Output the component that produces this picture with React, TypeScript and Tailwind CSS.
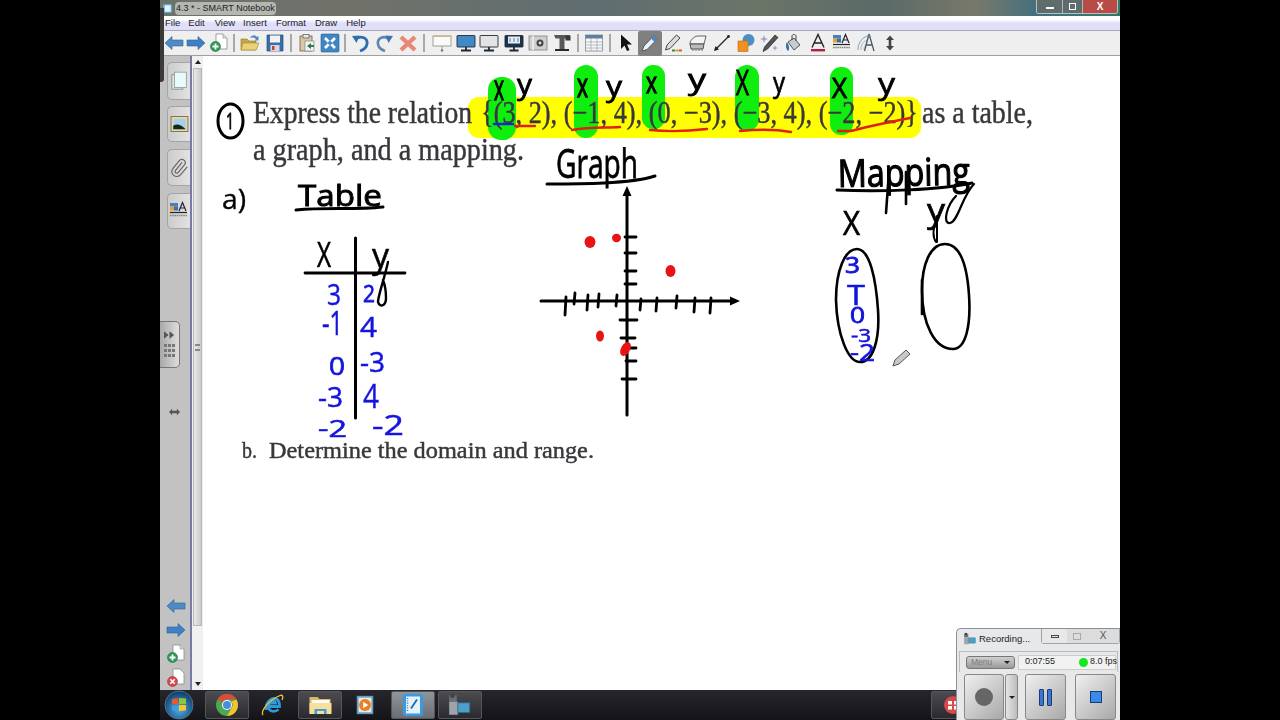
import React from "react";
import { Paperclip } from "lucide-react";

type P = { className?: string };
const I = ({ children, className = "w-[20px] h-[20px]" }: { children: React.ReactNode; className?: string }) => (
  <svg viewBox="0 0 20 20" className={className}>{children}</svg>
);

const ArrowL = (p: P) => (
  <I {...p}><path d="M1 10 L8 3.5 V7 H19 V13 H8 V16.5 Z" fill="#4d8ac6" stroke="#2f6296" strokeWidth=".6" /></I>
);
const ArrowR = (p: P) => (
  <I {...p}><path d="M19 10 L12 3.5 V7 H1 V13 H12 V16.5 Z" fill="#3f7fc4" stroke="#2f6296" strokeWidth=".6" /></I>
);
const NewPage = (p: P) => (
  <I {...p}>
    <path d="M7 1 H14 L18 5 V16 H7 Z" fill="#fff" stroke="#8a8a8a" strokeWidth=".8" />
    <path d="M14 1 V5 H18" fill="#ddd" stroke="#8a8a8a" strokeWidth=".6" />
    <circle cx="6.5" cy="13.5" r="5" fill="#2f9a58" stroke="#1f6a3a" strokeWidth=".6" />
    <path d="M6.5 10.5 V16.5 M3.5 13.5 H9.5" stroke="#fff" strokeWidth="1.8" />
  </I>
);
const DelPage = (p: P) => (
  <I {...p}>
    <path d="M7 1 H14 L18 5 V16 H7 Z" fill="#fff" stroke="#8a8a8a" strokeWidth=".8" />
    <circle cx="6.5" cy="13.5" r="5" fill="#d84850" stroke="#983038" strokeWidth=".6" />
    <path d="M4.3 11.3 L8.7 15.7 M8.7 11.3 L4.3 15.7" stroke="#fff" strokeWidth="1.6" />
  </I>
);
const Folder = (p: P) => (
  <I {...p}>
    <path d="M1 17 V6 H7 L9 8 H16 V17 Z" fill="#c9a445" stroke="#8e7430" strokeWidth=".6" />
    <path d="M1 17 L3 10 H19 L16 17 Z" fill="#ecd078" stroke="#a08838" strokeWidth=".6" />
    <path d="M10 5 C12 1.5 15 1.5 17 4 L18.5 3 V7.5 H14.5 L16 6 C14.5 4.5 12.5 4 10 5Z" fill="#4d8ac6" />
  </I>
);
const Save = (p: P) => (
  <I {...p}>
    <path d="M2 2 H18 V18 H2 Z" fill="#3a6ea8" stroke="#234a78" strokeWidth=".7" />
    <rect x="5" y="2.5" width="10" height="7" fill="#f2f2f2" />
    <rect x="5.5" y="12" width="9" height="6" fill="#d8d8e0" />
    <rect x="7" y="13" width="2.5" height="4" fill="#c04040" />
  </I>
);
const Paste = (p: P) => (
  <I {...p}>
    <rect x="3" y="3" width="12" height="15" fill="#d8c8a8" stroke="#6c6050" strokeWidth=".8" />
    <rect x="6" y="1.5" width="6" height="3.5" fill="#e8e8e8" stroke="#555" strokeWidth=".7" />
    <rect x="8" y="8" width="9" height="10" fill="#f4f4f4" stroke="#777" strokeWidth=".6" />
    <path d="M10 13 L14 10 V12 H17 V14 H14 V16 Z" fill="#2f7a48" />
  </I>
);
const Tools = (p: P) => (
  <I {...p}>
    <rect x="1" y="1" width="18" height="18" rx="1" fill="#3f86c4" stroke="#2a5f90" strokeWidth=".6" />
    <path d="M5 5 L15 15 M15 5 L5 15" stroke="#fff" strokeWidth="2.6" />
    <circle cx="10" cy="10" r="2" fill="#3f86c4" />
  </I>
);
const Undo = (p: P) => (
  <I {...p}>
    <path d="M5 6 C10 2 17 5 16 11 C15.5 15 12 17 9 18" fill="none" stroke="#2f6eb0" strokeWidth="2.8" />
    <path d="M1 3 L8.5 2.5 L5.5 10 Z" fill="#2f6eb0" />
  </I>
);
const Redo = (p: P) => (
  <I {...p}>
    <path d="M15 6 C10 2 3 5 4 11 C4.5 15 8 17 11 18" fill="none" stroke="#5f88b0" strokeWidth="2.6" />
    <path d="M19 3 L11.5 2.5 L14.5 10 Z" fill="#3f74aa" />
  </I>
);
const RedX = (p: P) => (
  <I {...p}><path d="M3 4 L17 17 M17 4 L3 17" stroke="#e88878" strokeWidth="4.4" /></I>
);
const Board = (p: P) => (
  <I {...p}>
    <rect x="1" y="3" width="18" height="10" fill="#fafafa" stroke="#9a9a8a" strokeWidth=".9" />
    <rect x="1" y="2.5" width="18" height="1.5" fill="#c8b890" />
    <path d="M10 13 V17" stroke="#999" /><circle cx="10" cy="17.5" r="1.2" fill="#777" />
  </I>
);
const Screen = ({ className, fill }: P & { fill: string }) => (
  <I className={className}>
    <rect x="1" y="2.5" width="18" height="11.5" rx=".6" fill={fill} stroke="#1f2a38" strokeWidth=".9" />
    <path d="M10 14 V16.5 M5 17.5 H15" stroke="#1f2a38" strokeWidth="1.8" />
  </I>
);
const Screen3 = (p: P) => (
  <I {...p}>
    <rect x="1" y="2.5" width="18" height="11.5" rx=".6" fill="#17344e" stroke="#1f2a38" strokeWidth=".9" />
    <rect x="4" y="3.5" width="12" height="7" fill="#e8eef4" />
    <path d="M6 5 V9 M10 5 V9 M14 5 V9" stroke="#5a7a9a" />
    <path d="M10 14 V16.5 M5.5 17.5 H14.5" stroke="#1f2a38" strokeWidth="1.8" />
  </I>
);
const Camera = (p: P) => (
  <I {...p}>
    <rect x="1" y="3" width="18" height="14" fill="#cfcfcf" stroke="#808080" strokeWidth=".8" />
    <rect x="4" y="3" width="2" height="14" fill="#e8e8e8" />
    <circle cx="12" cy="10" r="3.5" fill="#444" /><circle cx="12" cy="10" r="1.4" fill="#ddd" />
  </I>
);
const Projector = (p: P) => (
  <I {...p}>
    <path d="M2 2 H18 L16.5 5.5 H12.5 V16 H7.5 V5.5 H3.5 Z" fill="#55585a" />
    <rect x="13.5" y="2.5" width="5" height="5" fill="#38383a" />
    <rect x="3" y="16" width="14" height="2" fill="#2a2a2a" />
  </I>
);
const TableIcon = (p: P) => (
  <I {...p}>
    <rect x="1.5" y="2" width="17" height="16" fill="#f8f8f8" stroke="#7f8a98" strokeWidth=".8" />
    <rect x="1.5" y="2" width="17" height="3.5" fill="#5f7f9f" />
    <path d="M1.5 9 H18.5 M1.5 12 H18.5 M1.5 15 H18.5 M7 5 V18 M13 5 V18" stroke="#9aa2ac" strokeWidth=".7" />
  </I>
);
const Cursor = (p: P) => (
  <I {...p}><path d="M5 1.5 V16 L8.5 12.5 L11 18 L13.5 17 L11 11.5 H16 Z" fill="#111" /></I>
);
const Pen = (p: P) => (
  <I {...p}>
    <path d="M2 18 L4 13 L14 2.5 L17.5 6 L7 16.5 Z" fill="#eef2f6" stroke="#30465c" strokeWidth=".8" />
    <path d="M11 5.5 L14 2.5 L17.5 6 L14.5 9 Z" fill="#4f86bc" />
  </I>
);
const CPen = (p: P) => (
  <I {...p}>
    <path d="M1.5 17 L3 12 L12.5 2 L16 5 L6 15.5 Z" fill="#dcdcdc" stroke="#333" strokeWidth=".9" />
    <path d="M8 17.5 H11" stroke="#3a8a3a" strokeWidth="2" /><path d="M11.5 17.5 H14" stroke="#d8a020" strokeWidth="2" /><path d="M14.5 17.5 H18" stroke="#d06030" strokeWidth="2" />
  </I>
);
const Eraser = (p: P) => (
  <I {...p}>
    <path d="M2 10 C3 6 6 4 9 3 H18 L16 11 H2 Z" fill="#f4f4f4" stroke="#555" strokeWidth=".9" />
    <path d="M2 11 H16 L15 16 H3 Z" fill="#bbb" stroke="#444" strokeWidth=".9" />
    <path d="M5 16 V18 M8 16 V18 M11 16 V18 M14 16 V18" stroke="#777" />
  </I>
);
const LineI = (p: P) => (
  <I {...p}>
    <path d="M3 17 L16 4" stroke="#222" strokeWidth="1.2" />
    <path d="M2 18 L3.5 13 L7 16.5 Z" fill="#222" /><circle cx="16.5" cy="3.5" r="1.4" fill="#222" />
  </I>
);
const Shapes = (p: P) => (
  <I {...p}>
    <circle cx="12.5" cy="7" r="6" fill="#4d8fc4" />
    <rect x="2" y="8" width="10" height="10.5" fill="#f09020" stroke="#c06810" strokeWidth=".6" />
  </I>
);
const Magic = (p: P) => (
  <I {...p}>
    <path d="M3 18.5 L4.5 14 L15 2 L18 4.5 L7.5 16 Z" fill="#555" stroke="#222" strokeWidth=".7" />
    <path d="M4 2 L5 5 L8 6 L5 7 L4 10 L3 7 L0 6 L3 5 Z" fill="#a898d8" />
    <path d="M15 12 L15.8 14.2 L18 15 L15.8 15.8 L15 18 L14.2 15.8 L12 15 L14.2 14.2 Z" fill="#a898d8" />
  </I>
);
const Bucket = (p: P) => (
  <I {...p}>
    <path d="M4 9 L10 5 L16 12 L10 17 Z" fill="#c8ccd0" stroke="#444" strokeWidth=".9" />
    <path d="M8 7 V3 C8 1 12 1 12 3 V8" fill="none" stroke="#444" strokeWidth="1" />
    <path d="M3 9 C1 12 2 16 4 18 C6 16 5 12 3 9Z" fill="#3a6ea8" />
  </I>
);
const AIcon = (p: P) => (
  <I {...p}>
    <path d="M4 14.5 L10 1.5 L16 14.5 M6.5 10 H13.5" fill="none" stroke="#222" strokeWidth="1.4" />
    <rect x="3" y="16" width="14" height="2.4" fill="#b02040" />
  </I>
);
const Props = (p: P) => (
  <I {...p}>
    <rect x="1" y="2" width="8" height="3.5" fill="#4a80b8" /><rect x="1" y="5.5" width="4" height="4" fill="#e8a030" /><rect x="5" y="5.5" width="4" height="4" fill="#3a70a8" />
    <path d="M10 10 L13.5 1.5 L17 10 M11.5 7 H15.5" fill="none" stroke="#223" strokeWidth="1.2" />
    <path d="M1 11.5 H18" stroke="#222" strokeWidth="1.2" />
    <path d="M1 14.5 H18" stroke="#888" strokeWidth="1.6" strokeDasharray="1.6 .6" />
  </I>
);
const Compass = (p: P) => (
  <I {...p}>
    <path d="M2 17 A14 14 0 0 1 11 3" fill="none" stroke="#8aa0b4" strokeWidth="1" />
    <path d="M5 17 A10 10 0 0 1 11 7" fill="none" stroke="#a8b8c8" strokeWidth="1" />
    <path d="M8 17 A6 6 0 0 1 11 11" fill="none" stroke="#b8c8d4" strokeWidth="1" />
    <path d="M13 1 L8.5 18 M13 1 L18 18 M10 12 H16" fill="none" stroke="#4a5a6a" strokeWidth="1.3" />
    <circle cx="13" cy="3" r="1.6" fill="#6a7a8a" />
  </I>
);
const UpDown = (p: P) => (
  <I {...p}>
    <path d="M10 2.5 L14 7 H11.3 V13 H14 L10 17.5 L6 13 H8.7 V7 H6 Z" fill="#444" />
  </I>
);

const Sep = ({ className = "" }: P) => (
  <div className={`w-[2px] h-[18px] bg-[#a8a8a8] mx-[3px] shrink-0 ${className}`} />
);
const Slot = ({ children, className = "w-[24px]" }: { children: React.ReactNode; className?: string }) => (
  <div className={`h-[25px] flex items-center justify-center shrink-0 ${className}`}>{children}</div>
);
const Side = ({ children }: { children: React.ReactNode }) => (
  <div className="h-[24px] w-[24px] flex items-center justify-center shrink-0">{children}</div>
);

const Tab = ({ children, className }: { children: React.ReactNode; className: string }) => (
  <div className={`w-[23px] self-end rounded-l-[5px] border border-r-0 border-[#a4a4a4] bg-[linear-gradient(90deg,#cccccc,#e2e2e2)] flex items-center justify-center ${className}`}>
    {children}
  </div>
);

const TaskBtn = ({ children, active }: { children: React.ReactNode; active?: boolean }) => (
  <div className={`w-[44px] h-[28px] rounded-[2px] border border-[#55555c] flex items-center justify-center shrink-0 ${active ? "bg-[linear-gradient(180deg,#8f959c,#6a6e74)]" : "bg-[linear-gradient(180deg,#4c4c50,#2a2a2e)]"}`}>
    {children}
  </div>
);

const Orb = () => (
  <svg viewBox="0 0 30 30" className="w-[30px] h-[30px]">
    <defs>
      <radialGradient id="orb" cx="50%" cy="65%" r="60%">
        <stop offset="0" stopColor="#4fb0ec" />
        <stop offset="1" stopColor="#123f6e" />
      </radialGradient>
    </defs>
    <circle cx="15" cy="15" r="14" fill="url(#orb)" stroke="#5f7f9a" strokeWidth=".8" />
    <path d="M8 9 L14 8 V14 L8 14.5 Z" fill="#e8582c" />
    <path d="M15 8 L22 8.5 V14 L15 14 Z" fill="#8cc63f" />
    <path d="M8 15.5 L14 15 V21 L8 20 Z" fill="#3aa0e0" />
    <path d="M15 15 L22 15 V20.5 L15 21 Z" fill="#f8c820" />
  </svg>
);
const Chrome = () => (
  <svg viewBox="0 0 24 24" className="w-[24px] h-[24px]">
    <circle cx="12" cy="12" r="11" fill="#4aa850" />
    <path d="M12 1 A11 11 0 0 1 21.5 6.5 H12 A5.5 5.5 0 0 0 7 9.5 L2.5 6.5 A11 11 0 0 1 12 1Z" fill="#dc4a3c" />
    <path d="M21.5 6.5 A11 11 0 0 1 12 23 L16.8 14.8 A5.5 5.5 0 0 0 16.5 8.5 Z" fill="#f4c430" />
    <circle cx="12" cy="12" r="5" fill="#fff" /><circle cx="12" cy="12" r="4" fill="#4a8ae0" />
  </svg>
);
const IE = () => (
  <svg viewBox="0 0 24 24" className="w-[24px] h-[24px]">
    <path d="M6 17 C6 7 13 4 16.5 6 C20 8 19.5 12 19.5 13.5 H8.5 M9 10 H15.5 C15 6.5 9.5 7 8.5 13.5 C8 18 14 20 18.5 16.5" fill="none" stroke="#2f9ad8" strokeWidth="2.8" />
    <path d="M3 22 C0.5 19 7 8 20 2.5 C23 1.5 23.5 4 22 7" fill="none" stroke="#f0c030" strokeWidth="1.3" />
  </svg>
);
const Explorer = () => (
  <svg viewBox="0 0 24 24" className="w-[25px] h-[24px]">
    <path d="M1 20 V4 H9 L11 6 H22 V20 Z" fill="#d8b860" />
    <rect x="3" y="7" width="18" height="5" fill="#fafafa" />
    <path d="M1 21 V10 H23 V21 Z" fill="#f4e09a" />
    <path d="M6 21 V16 H18 V21 H15.5 V18 H8.5 V21 Z" fill="#4a9ad0" />
  </svg>
);
const Media = () => (
  <svg viewBox="0 0 24 24" className="w-[22px] h-[22px]">
    <rect x="3" y="2" width="18" height="20" fill="#5f9ec8" />
    <rect x="5" y="4" width="14" height="16" fill="#f0e8d8" />
    <circle cx="12" cy="12" r="6.5" fill="#e88028" />
    <path d="M10 8.5 L15.5 12 L10 15.5 Z" fill="#fff" />
  </svg>
);
const NotebookApp = () => (
  <svg viewBox="0 0 24 24" className="w-[24px] h-[24px]">
    <rect x="2" y="1" width="20" height="22" rx="2.5" fill="#3a9ae0" />
    <rect x="5" y="3.5" width="14" height="17" fill="#e4f2fc" />
    <path d="M6.5 5 V19" stroke="#3a7ab0" strokeDasharray="1 1.4" strokeWidth="1.4" />
    <path d="M10 15.5 L16 6.5" stroke="#1f6ab0" strokeWidth="1.8" />
  </svg>
);
const CamApp = ({ className = "w-[26px] h-[26px]" }: P) => (
  <svg viewBox="0 0 24 24" className={className}>
    <rect x="2" y="3" width="7" height="6" fill="#6a7078" /><circle cx="5" cy="3.5" r="2.2" fill="#40464e" />
    <rect x="2" y="9" width="8" height="12" fill="#a0a4a8" />
    <rect x="10" y="10" width="11" height="9" fill="#4aa0c8" stroke="#2a6a90" strokeWidth=".7" />
  </svg>
);

const Hand = ({
  t, x, y, s, w, c = "#000", sw = 0.6, r,
}: { t: string; x: number; y: number; s: number; w?: number; c?: string; sw?: number; r?: number }) => (
  <text
    x={x} y={y} fontSize={s} fill={c} stroke={c} strokeWidth={sw}
    textLength={w} lengthAdjust={w ? "spacingAndGlyphs" : undefined}
    transform={r ? `rotate(${r} ${x} ${y})` : undefined}
  >
    {t}
  </text>
);

const blue = "#1414dc";
const red = "#e81414";
const xTicks = [[565, 297, 315], [574, 293, 304], [587, 295, 310], [598, 294, 307], [616, 295, 306], [640, 299, 310], [656, 298, 311], [676, 296, 308], [694, 298, 312], [710, 298, 313]];
const yTicks = [[625, 636, 237], [625, 636, 253], [625, 636, 271], [625, 636, 284], [620, 637, 320], [621, 635, 338], [626, 636, 348], [626, 636, 361], [622, 636, 379]];

const Canvas = () => (
  <svg viewBox="203 56 917 634" className="block w-[917px] h-[634px] font-['Open_Sans'] blur-[0.35px]">
    <rect x="468" y="97" width="453" height="41" rx="11" fill="#ffff00" />
    <g fill="#10ee10">
      <rect x="488" y="77" width="28" height="63" rx="13" />
      <rect x="574" y="65" width="24" height="73" rx="12" />
      <rect x="642" y="65" width="23" height="64" rx="11" />
      <rect x="735" y="65" width="24" height="66" rx="12" />
      <rect x="830" y="67" width="23" height="68" rx="11" />
    </g>

    <g className="font-['Liberation_Serif']" fill="#38383c" stroke="#38383c" strokeWidth=".45">
      <text x="253" y="123" fontSize="31" textLength="219" lengthAdjust="spacingAndGlyphs">Express the relation</text>
      <text x="481" y="123" fontSize="31" textLength="437" lengthAdjust="spacingAndGlyphs">{"{"}(3, 2), (−1, 4), (0, −3), (−3, 4), (−2, −2){"}"}</text>
      <text x="922" y="123" fontSize="31" textLength="111" lengthAdjust="spacingAndGlyphs">as a table,</text>
      <text x="253" y="160" fontSize="31" textLength="271" lengthAdjust="spacingAndGlyphs">a graph, and a mapping.</text>
      <text x="242" y="458" fontSize="23" textLength="15" lengthAdjust="spacingAndGlyphs">b.</text>
      <text x="269" y="458" fontSize="23" textLength="325" lengthAdjust="spacingAndGlyphs">Determine the domain and range.</text>
    </g>

    <g fill="none" strokeLinecap="round" strokeLinejoin="round">
      <path d="M494 124 H513" stroke="#1428c8" strokeWidth="2.6" />
      <g stroke="#e02010" strokeWidth="2.4">
        <path d="M515 126 H535" />
        <path d="M572 130 C590 127 605 128 620 127" />
        <path d="M650 130 C670 132 690 131 707 129" />
        <path d="M740 131 C760 129 780 130 791 132" />
        <path d="M838 131 H851 C865 127 890 122 910 118" />
      </g>
      <ellipse cx="230.5" cy="121" rx="12.5" ry="17" stroke="#000" strokeWidth="3" />
      <path d="M296 210 C325 207 355 210 383 207" stroke="#000" strokeWidth="3" />
      <path d="M547 184 C580 184 630 184 655 176" stroke="#000" strokeWidth="3" />
      <path d="M837 190 C880 192 940 190 972 183" stroke="#000" strokeWidth="3" />
      <path d="M889 172 L886 213 M906 172 V204" stroke="#000" strokeWidth="2.6" />
      <path d="M974 184 C962 196 958 222 950 223 C942 224 947 205 956 196" stroke="#000" strokeWidth="2.2" />
      <path d="M937 216 V242 M937 222 C932 228 933 238 936 242" stroke="#000" strokeWidth="2" />

      {/* table */}
      <path d="M355.5 238 V418" stroke="#000" strokeWidth="3" />
      <path d="M305 273 H405" stroke="#000" strokeWidth="2.8" />
      <path d="M388 262 C384 280 378 296 378 302 C380 308 386 306 386 298 C386 290 385 285 383 280" stroke="#000" strokeWidth="2.4" />

      {/* graph axes */}
      <path d="M627 192 V415 M541 301 H735" stroke="#000" strokeWidth="3" />
      {xTicks.map(([x, a, b]) => <path key={x} d={`M${x + 1} ${a} L${x} ${b}`} stroke="#000" strokeWidth="2.8" />)}
      {yTicks.map(([a, b, y]) => <path key={y} d={`M${a} ${y} H${b}`} stroke="#000" strokeWidth="2.8" />)}

      {/* mapping ovals */}
      <path d="M857 249 C845 249 836 270 836 300 C837 335 848 362 860 362 C873 362 880 340 878 310 C876 280 870 249 857 249Z" stroke="#000" strokeWidth="2.6" />
      <path d="M945 244 C930 244 922 265 922 290 C922 325 935 349 953 349 C966 349 971 325 969 295 C967 265 960 244 945 244Z" stroke="#000" strokeWidth="2.6" />
      <path d="M922 280 V314" stroke="#000" strokeWidth="2.6" />
    </g>
    <path d="M627 186 L622.5 196 H631.5 Z M740 301 L730 296.5 V305.5 Z" fill="#000" />

    <g fill={red}>
      <ellipse cx="590" cy="242" rx="5.5" ry="6" />
      <ellipse cx="616.5" cy="238" rx="4.5" ry="4.2" />
      <ellipse cx="670.5" cy="271" rx="5" ry="6" />
      <ellipse cx="600" cy="336" rx="4" ry="5.5" />
      <ellipse cx="625.5" cy="349" rx="4.5" ry="7.5" transform="rotate(30 625.5 349)" />
    </g>

    <g>
      <Hand t="x" x={494} y={100} s={34} w={10} sw={1.3} />
      <Hand t="y" x={517} y={94} s={27} w={15} sw={0.8} />
      <Hand t="x" x={577} y={97} s={32} w={11} sw={1.3} />
      <Hand t="y" x={606} y={96} s={27} w={16} sw={0.8} />
      <Hand t="x" x={646} y={93} s={30} w={11} sw={1.3} />
      <Hand t="y" x={688} y={89} s={27} w={18} sw={0.8} />
      <Hand t="X" x={736} y={95} s={35} w={13} sw={1} />
      <Hand t="y" x={773} y={92} s={27} w={12} sw={0.7} />
      <Hand t="X" x={832} y={98} s={28} w={15} sw={1} />
      <Hand t="y" x={878} y={94} s={29} w={17} sw={0.7} />
      <Hand t="1" x={226} y={129} s={21} w={8} sw={0.8} />
      <Hand t="a)" x={222} y={209} s={27} w={24} sw={0.4} />
      <Hand t="Table" x={298} y={206} s={29} w={84} sw={0.9} />
      <Hand t="Graph" x={556} y={178} s={40} w={82} sw={0.8} />
      <Hand t="Mapping" x={838} y={187} s={38} w={132} sw={1.2} r={-1} />
      <Hand t="X" x={317} y={267} s={34} w={14} sw={0.6} />
      <Hand t="y" x={372} y={268} s={34} w={17} sw={0.5} />
      <Hand t="X" x={843} y={235} s={33} w={17} sw={0.7} />
      <Hand t="y" x={927} y={222} s={32} w={18} sw={0.7} />
    </g>
    <g>
      <Hand t="3" x={327} y={305} s={30} w={14} c={blue} sw={0.5} />
      <Hand t="2" x={363} y={302} s={24} w={12} c={blue} sw={0.8} />
      <Hand t="-1" x={322} y={335} s={32} w={21} c={blue} sw={0.5} />
      <Hand t="4" x={360} y={337} s={27} w={17} c={blue} sw={0.5} />
      <Hand t="0" x={329} y={375} s={25} w={16} c={blue} sw={0.7} />
      <Hand t="-3" x={360} y={372} s={27} w={25} c={blue} sw={0.5} />
      <Hand t="-3" x={318} y={407} s={28} w={25} c={blue} sw={0.5} />
      <Hand t="4" x={363} y={408} s={33} w={16} c={blue} sw={0.4} />
      <Hand t="-2" x={318} y={437} s={24} w={29} c={blue} sw={0.6} />
      <Hand t="-2" x={372} y={435} s={27} w={32} c={blue} sw={0.5} />
      <Hand t="3" x={845} y={273} s={22} w={15} c={blue} sw={0.8} />
      <Hand t="T" x={847} y={305} s={27} w={18} c={blue} sw={0.5} />
      <Hand t="0" x={850} y={323} s={22} w={15} c={blue} sw={0.8} />
      <Hand t="-3" x={851} y={342} s={19} w={20} c={blue} sw={0.6} />
      <Hand t="-2" x={850} y={361} s={24} w={25} c={blue} sw={0.7} />
    </g>
    <path d="M893 366 L895 360 L906 350 L910 354 L899 364 Z" fill="#c8c8c8" stroke="#555" strokeWidth="1" />
  </svg>
);

export default function App() {
  return (
    <div className="w-[1280px] h-[720px] bg-black flex justify-center overflow-hidden font-['Liberation_Sans',sans-serif]">
      <div className="w-[960px] h-[720px] relative flex flex-col bg-white">
        {/* title */}
        <div className="h-[16px] shrink-0 flex items-center justify-between bg-[linear-gradient(90deg,#6d716c,#70726a_20%,#5f6d70_45%,#6c7468_62%,#5a6a68_75%,#78786a_85%,#3f6f80_92%,#2f7a68)]">
          <div className="flex items-center">
            <svg viewBox="0 0 12 12" className="w-[11px] h-[11px] ml-[2px]">
              <rect x="1" y="1" width="10" height="10" rx="1.5" fill="#5fa8dc" />
              <rect x="3" y="2.5" width="6.5" height="7" fill="#e8f4fc" />
            </svg>
            <div className="ml-[2px] px-[1px] h-[13px] rounded-[4px] bg-[#b4b6b0] text-[9px] leading-[13px] text-[#222]">4.3 * - SMART Notebook</div>
          </div>
          <div className="flex h-[14px] self-start mr-[2px] rounded-b-[3px] border border-t-0 border-[#b8c0c0] overflow-hidden">
            <div className="w-[25px] flex items-center justify-center bg-[#5f6c6c]"><div className="w-[8px] h-[2px] bg-white mt-[3px]" /></div>
            <div className="w-[21px] flex items-center justify-center bg-[#5f6c6c] border-x border-[#b0b8b8]"><div className="w-[7px] h-[7px] border border-white" /></div>
            <div className="w-[34px] flex items-center justify-center bg-[#b84a48] text-white text-[10px] font-bold leading-none">X</div>
          </div>
        </div>
        {/* menu */}
        <div className="h-[15px] shrink-0 flex items-center pl-[5px] text-[9.5px] text-[#222] bg-[linear-gradient(180deg,#ffffff,#ffffff_25%,#dfdffa_50%,#dfdffa)] border-b border-[#a8a8b8]">
          <span>File</span>
          <span className="ml-[8px]">Edit</span>
          <span className="ml-[10px]">View</span>
          <span className="ml-[8px]">Insert</span>
          <span className="ml-[9px]">Format</span>
          <span className="ml-[9px]">Draw</span>
          <span className="ml-[9px]">Help</span>
        </div>
        {/* toolbar */}
        <div className="h-[25px] shrink-0 flex items-center pl-[3px] bg-[#efefef] border-b border-[#a0a0a0]">
          <Slot className="w-[22px]"><ArrowL /></Slot>
          <Slot className="w-[22px]"><ArrowR /></Slot>
          <Slot className="w-[24px]"><NewPage /></Slot>
          <Sep className="ml-[2px]" />
          <Slot className="w-[24px]"><Folder /></Slot>
          <Slot className="w-[25px]"><Save /></Slot>
          <Sep />
          <Slot className="w-[24px]"><Paste /></Slot>
          <Slot className="w-[22px]"><Tools /></Slot>
          <Sep />
          <Slot className="w-[23px]"><Undo /></Slot>
          <Slot className="w-[24px]"><Redo /></Slot>
          <Slot className="w-[24px]"><RedX /></Slot>
          <Sep className="mr-[5px]" />
          <Slot className="w-[24px]"><Board /></Slot>
          <Slot className="w-[23px]"><Screen fill="#3f8ac4" /></Slot>
          <Slot className="w-[24px]"><Screen fill="#e4e4e4" /></Slot>
          <Slot className="w-[25px]"><Screen3 /></Slot>
          <Slot className="w-[24px]"><Camera /></Slot>
          <Slot className="w-[24px]"><Projector /></Slot>
          <Sep />
          <Slot className="w-[24px]"><TableIcon /></Slot>
          <Sep />
          <Slot className="w-[24px]"><Cursor /></Slot>
          <Slot className="w-[24px] bg-[#808080] rounded-[2px]"><Pen /></Slot>
          <Slot className="w-[24px]"><CPen /></Slot>
          <Slot className="w-[24px]"><Eraser /></Slot>
          <Slot className="w-[24px]"><LineI /></Slot>
          <Slot className="w-[24px]"><Shapes /></Slot>
          <Slot className="w-[24px]"><Magic /></Slot>
          <Slot className="w-[24px]"><Bucket /></Slot>
          <Slot className="w-[24px]"><AIcon /></Slot>
          <Slot className="w-[24px]"><Props /></Slot>
          <Slot className="w-[24px]"><Compass /></Slot>
          <Slot className="w-[24px]"><UpDown /></Slot>
        </div>
        {/* main */}
        <div className="flex-1 min-h-0 flex">
          <div className="w-[30px] shrink-0 bg-[#c2c2c2] flex flex-col">
            <Tab className="mt-[6px] h-[38px]">
              <svg viewBox="0 0 20 24" className="w-[17px] h-[21px]">
                <rect x="1" y="4" width="13" height="17" fill="#d8e4e8" stroke="#777" strokeWidth=".8" />
                <rect x="4" y="1" width="14" height="18" fill="#e8fafc" stroke="#888" strokeWidth=".8" />
              </svg>
            </Tab>
            <Tab className="mt-[6px] h-[36px]">
              <svg viewBox="0 0 20 18" className="w-[19px] h-[16px]">
                <rect x=".5" y=".5" width="19" height="17" fill="#e8d8a8" stroke="#7a6a40" />
                <rect x="3" y="3" width="14" height="12" fill="#a8d0e8" />
                <path d="M3 11 C7 8 12 10 17 15 H3 Z" fill="#0f2a1a" />
              </svg>
            </Tab>
            <Tab className="mt-[7px] h-[37px]">
              <Paperclip className="w-[20px] h-[20px] text-[#666] rotate-[-5deg]" strokeWidth={1.4} />
            </Tab>
            <Tab className="mt-[7px] h-[36px]"><Props /></Tab>
            <div className="mt-[92px] w-[20px] h-[47px] shrink-0 rounded-r-[5px] border border-l-0 border-[#777] bg-[linear-gradient(90deg,#a8a8a8,#dedede)] flex flex-col items-center justify-center gap-[5px]">
              <svg viewBox="0 0 12 8" className="w-[11px] h-[8px]"><path d="M0 0 L5 4 L0 8Z M6 0 L11 4 L6 8Z" fill="#555" /></svg>
              <svg viewBox="0 0 11 14" className="w-[11px] h-[14px]">
                <g fill="#777">
                  <rect x="0" y="0" width="3" height="3" /><rect x="4" y="0" width="3" height="3" /><rect x="8" y="0" width="3" height="3" />
                  <rect x="0" y="5" width="3" height="3" /><rect x="4" y="5" width="3" height="3" /><rect x="8" y="5" width="3" height="3" />
                  <rect x="0" y="10" width="3" height="3" /><rect x="4" y="10" width="3" height="3" /><rect x="8" y="10" width="3" height="3" />
                </g>
              </svg>
            </div>
            <svg viewBox="0 0 14 8" className="mt-[40px] ml-[9px] w-[11px] h-[8px] shrink-0"><path d="M0 4 L4 0 V2.5 H10 V0 L14 4 L10 8 V5.5 H4 V8 Z" fill="#555" /></svg>
            <div className="mt-auto ml-[4px] flex flex-col">
              <Side><ArrowL /></Side>
              <Side><ArrowR /></Side>
              <Side><NewPage /></Side>
              <Side><DelPage /></Side>
            </div>
          </div>
          <div className="w-[2px] shrink-0 bg-[#7a7aa8]" />
          <div className="w-[11px] shrink-0 bg-[#f0f0f0] flex flex-col items-center">
            <div className="h-[12px] shrink-0 flex items-center"><div className="w-0 h-0 border-x-[3px] border-x-transparent border-b-[4px] border-b-[#222]" /></div>
            <div className="h-[558px] w-[9px] shrink-0 bg-[linear-gradient(90deg,#e8e8e8,#cacaca)] border border-[#b8b8b8] flex items-center justify-center">
              <div className="w-[5px] h-[7px] border-y-2 border-[#888]" />
            </div>
            <div className="mt-auto h-[12px] shrink-0 flex items-center"><div className="w-0 h-0 border-x-[3px] border-x-transparent border-t-[4px] border-t-[#222]" /></div>
          </div>
          <div className="flex-1 min-w-0 bg-white"><Canvas /></div>
        </div>
        {/* taskbar */}
        <div className="h-[30px] shrink-0 flex items-center bg-[linear-gradient(180deg,#26262c,#141418)]">
          <div className="w-[4px]" />
          <Orb />
          <div className="w-[11px]" />
          <TaskBtn><Chrome /></TaskBtn>
          <div className="w-[46px] flex justify-center"><IE /></div>
          <div className="ml-[3px]"><TaskBtn><Explorer /></TaskBtn></div>
          <div className="w-[46px] flex justify-center"><Media /></div>
          <div className="ml-[3px]"><TaskBtn active><NotebookApp /></TaskBtn></div>
          <div className="ml-[3px]"><TaskBtn><CamApp /></TaskBtn></div>
          <div className="ml-[449px]"><TaskBtn>
            <svg viewBox="0 0 20 20" className="w-[20px] h-[20px]"><circle cx="10" cy="10" r="9" fill="#d84848" /><path d="M5 6 H9 V9.5 H5Z M11 6 H15 V9.5 H11Z M5 11 H9 V14.5 H5Z M11 11 H15 V14.5 H11Z" fill="#fff" /></svg>
          </TaskBtn></div>
        </div>
        {/* edge of a window behind the app */}
        <div className="absolute left-0 top-[8px] w-[4px] h-[74px] rounded-br-[3px] bg-[#3a3a3a]" />
        {/* recorder window */}
        <div className="absolute right-0 bottom-0 w-[164px] h-[92px] rounded-tl-[5px] border-t border-l border-[#8a9098] bg-[#e6e8ea] flex flex-col">
          <div className="h-[22px] shrink-0 flex items-start">
            <CamApp className="w-[14px] h-[14px] ml-[6px] mt-[3px]" />
            <span className="ml-[2px] mt-[4px] text-[9.5px] leading-[12px] text-[#222]">Recording...</span>
            <div className="ml-auto flex h-[15px] rounded-b-[3px] border border-t-0 border-[#a0a4a8]">
              <div className="w-[25px] flex items-center justify-center bg-[#e8e8e8]"><div className="w-[8px] h-[3px] border border-[#444]" /></div>
              <div className="w-[20px] flex items-center justify-center bg-[#dcdcdc]"><div className="w-[8px] h-[7px] border border-[#aaa]" /></div>
              <div className="w-[32px] flex items-center justify-center bg-[#dcdcdc] text-[10px] leading-none text-[#555]">X</div>
            </div>
          </div>
          <div className="mx-[2px] h-[21px] shrink-0 flex items-center border border-b-0 border-[#bbb] pl-[6px]">
            <div className="w-[49px] h-[13px] rounded-[3px] border border-[#777] bg-[linear-gradient(180deg,#d0d0d0,#9a9a9a)] flex items-center justify-between px-[4px] text-[8.5px] leading-none text-[#7a7a7a]">
              <span>Menu</span>
              <div className="w-0 h-0 border-x-[3px] border-x-transparent border-t-[3px] border-t-[#222]" />
            </div>
            <div className="ml-[3px] w-[98px] h-[15px] bg-[#f2f2f2] border border-[#ccc] flex items-center pl-[6px] text-[9px] text-[#222] whitespace-nowrap">
              <span>0:07:55</span>
              <div className="ml-[24px] w-[9px] h-[9px] rounded-full bg-[#14e81e] shrink-0" />
              <span className="ml-[2px]">8.0 fps</span>
            </div>
          </div>
          <div className="h-[46px] shrink-0 flex items-start pl-[7px] pt-[2px]">
            <div className="w-[40px] h-[46px] rounded-[3px] border border-[#888] bg-[linear-gradient(135deg,#f0f0f0,#a8a8a8)] flex items-center justify-center">
              <div className="w-[18px] h-[18px] rounded-full bg-[#666]" />
            </div>
            <div className="ml-[1px] w-[13px] h-[46px] rounded-[3px] border border-[#888] bg-[linear-gradient(90deg,#e4e4e4,#bcbcbc)] flex items-center justify-center">
              <div className="w-0 h-0 border-x-[3px] border-x-transparent border-t-[3px] border-t-[#222]" />
            </div>
            <div className="ml-[7px] w-[41px] h-[46px] rounded-[3px] border border-[#888] bg-[linear-gradient(135deg,#f0f0f0,#a8a8a8)] flex items-center justify-center gap-[3px]">
              <div className="w-[5px] h-[17px] rounded-[1px] bg-[#3a78d0] border border-[#1a3a80]" />
              <div className="w-[5px] h-[17px] rounded-[1px] bg-[#3a78d0] border border-[#1a3a80]" />
            </div>
            <div className="ml-[9px] w-[41px] h-[46px] rounded-[3px] border border-[#888] bg-[linear-gradient(135deg,#f0f0f0,#a8a8a8)] flex items-center justify-center">
              <div className="w-[12px] h-[12px] bg-[#3a8ae8] border border-[#1a3a80]" />
            </div>
          </div>
        </div>
      </div>
    </div>
  );
}
